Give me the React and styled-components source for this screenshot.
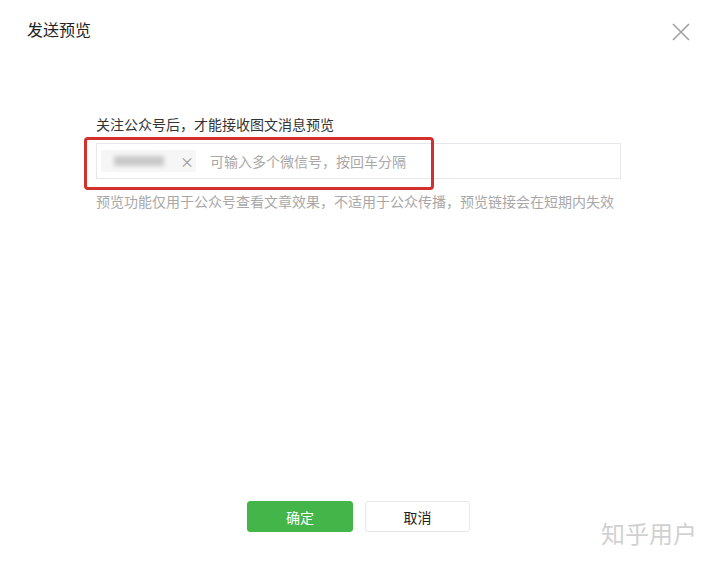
import React from "react";
import styled, { createGlobalStyle } from "styled-components";

const Global = createGlobalStyle`
  html, body { margin: 0; padding: 0; background: #fff; }
  body { font-family: "Noto Sans CJK SC", "Liberation Sans", sans-serif; }
`;

const Dialog = styled.div`
  position: relative;
  width: 713px;
  height: 562px;
  background: #fff;
  box-sizing: border-box;
  display: flex;
  flex-direction: column;
  overflow: hidden;
`;

const Header = styled.div`
  display: flex;
  align-items: center;
  justify-content: space-between;
  padding: 17px 22px 0 27px;
  height: 24px;
`;

const Title = styled.h3`
  margin: 0;
  font-size: 16px;
  font-weight: normal;
  color: #222;
  line-height: 24px;
`;

const CloseBtn = styled.button`
  border: 0;
  background: none;
  padding: 0;
  width: 20px;
  height: 20px;
  margin-top: 5px;
  cursor: pointer;
  display: flex;
`;

const Body = styled.div`
  flex: 1;
  padding: 74px 92px 0 96px;
  display: flex;
  flex-direction: column;
`;

const Label = styled.div`
  font-size: 14px;
  color: #333;
  line-height: 18px;
`;

const InputWrap = styled.div`
  position: relative;
  margin-top: 10px;
  height: 36px;
  border: 1px solid #e7e7eb;
  box-sizing: border-box;
  display: flex;
  align-items: center;
  padding-left: 4px;
  gap: 14px;
`;

const Tag = styled.span`
  display: flex;
  align-items: center;
  height: 22px;
  width: 95px;
  background: #f6f6f6;
  box-sizing: border-box;
  padding: 0 2px 0 13px;
  justify-content: space-between;
`;

const Blurred = styled.span`
  width: 50px;
  height: 10px;
  background: #c9c9c9;
  filter: blur(2px);
`;

const TagClose = styled.span`
  font-size: 14px;
  color: #999;
  line-height: 1;
`;

const Placeholder = styled.span`
  font-size: 14px;
  color: #a8a8a8;
`;

const Hint = styled.div`
  margin-top: 13px;
  font-size: 14px;
  color: #a8a8a8;
  line-height: 18px;
  white-space: nowrap;
`;

const Highlight = styled.div`
  position: absolute;
  left: -13px;
  top: -7px;
  width: 350px;
  height: 53px;
  border: 3px solid #d2302c;
  border-radius: 4px;
  box-sizing: border-box;
  pointer-events: none;
`;

const Footer = styled.div`
  display: flex;
  justify-content: center;
  gap: 12px;
  padding-bottom: 30px;
  padding-left: 4px;
`;

const Button = styled.button`
  width: ${(p) => (p.primary ? "106px" : "105px")};
  height: 31px;
  border-radius: 3px;
  font-size: 14px;
  font-family: inherit;
  border: 1px solid ${(p) => (p.primary ? "#44b549" : "#e4e8eb")};
  background: ${(p) => (p.primary ? "#44b549" : "#fff")};
  color: ${(p) => (p.primary ? "#fff" : "#222")};
  cursor: pointer;
`;

const Watermark = styled.div`
  position: absolute;
  right: 16px;
  bottom: 12px;
  font-size: 24px;
  color: rgba(200, 200, 200, 0.85);
  text-shadow: 1px 1px 0 rgba(255,255,255,0.8);
`;

export default function App() {
  return (
    <>
      <Global />
      <Dialog>
        <Header>
          <Title>发送预览</Title>
          <CloseBtn aria-label="关闭">
            <svg width="20" height="20" viewBox="0 0 20 20">
              <path d="M2 2 L18 18 M18 2 L2 18" stroke="#a0a0a0" strokeWidth="1.6" fill="none" />
            </svg>
          </CloseBtn>
        </Header>
        <Body>
          <Label>关注公众号后，才能接收图文消息预览</Label>
          <InputWrap>
            <Tag>
              <Blurred />
              <TagClose>×</TagClose>
            </Tag>
            <Placeholder>可输入多个微信号，按回车分隔</Placeholder>
            <Highlight />
          </InputWrap>
          <Hint>预览功能仅用于公众号查看文章效果，不适用于公众传播，预览链接会在短期内失效</Hint>
        </Body>
        <Footer>
          <Button primary>确定</Button>
          <Button>取消</Button>
        </Footer>
        <Watermark>知乎用户</Watermark>
      </Dialog>
    </>
  );
}
